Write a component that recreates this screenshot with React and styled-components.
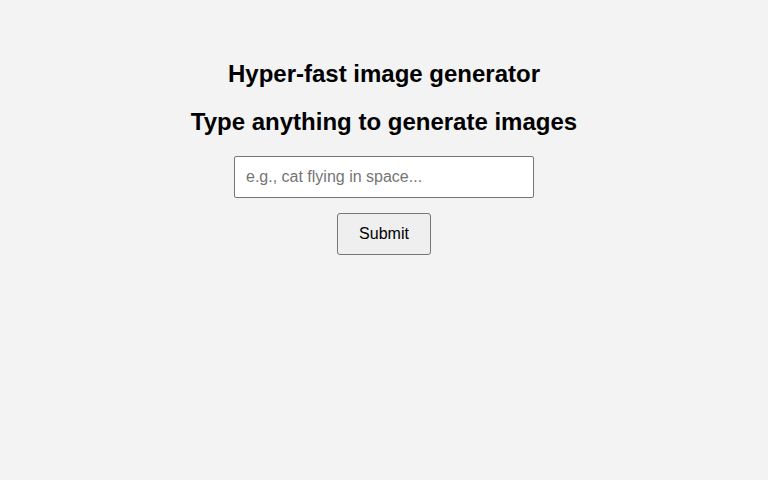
import React, { useState } from 'react';
import styled, { createGlobalStyle } from 'styled-components';

const GlobalStyle = createGlobalStyle`
  html, body {
    margin: 0;
    padding: 0;
    background: #f3f3f3;
    font-family: "Liberation Sans", Arial, sans-serif;
  }
`;

const Page = styled.main`
  min-height: 100vh;
  display: flex;
  flex-direction: column;
  align-items: center;
  padding-top: 60px;
  box-sizing: border-box;
`;

const Title = styled.h1`
  margin: 0;
  font-size: 24px;
  line-height: 28px;
  font-weight: bold;
  color: #000;
`;

const Subtitle = styled.h2`
  margin: 20px 0 0 0;
  font-size: 24px;
  line-height: 28px;
  font-weight: bold;
  color: #000;
`;

const Form = styled.form`
  display: flex;
  flex-direction: column;
  align-items: center;
  gap: 15px;
  margin-top: 20px;
`;

const PromptInput = styled.input`
  width: 300px;
  height: 42px;
  box-sizing: border-box;
  padding: 0 11px;
  font-family: inherit;
  font-size: 16px;
  color: #000;
  background: #fff;
  border: 1px solid #767676;
  border-radius: 2px;
  outline: none;

  &::placeholder {
    color: #757575;
  }
`;

const SubmitButton = styled.button`
  width: 94px;
  height: 42px;
  box-sizing: border-box;
  font-family: inherit;
  font-size: 16px;
  color: #000;
  background: #efefef;
  border: 1px solid #767676;
  border-radius: 3px;
  cursor: pointer;
`;

const App = () => {
  const [prompt, setPrompt] = useState('');

  return (
    <>
      <GlobalStyle />
      <Page>
        <Title>Hyper-fast image generator</Title>
        <Subtitle>Type anything to generate images</Subtitle>
        <Form onSubmit={(e) => e.preventDefault()}>
          <PromptInput
            value={prompt}
            onChange={(e) => setPrompt(e.target.value)}
            placeholder="e.g., cat flying in space..."
          />
          <SubmitButton type="submit">Submit</SubmitButton>
        </Form>
      </Page>
    </>
  );
};

export default App;
